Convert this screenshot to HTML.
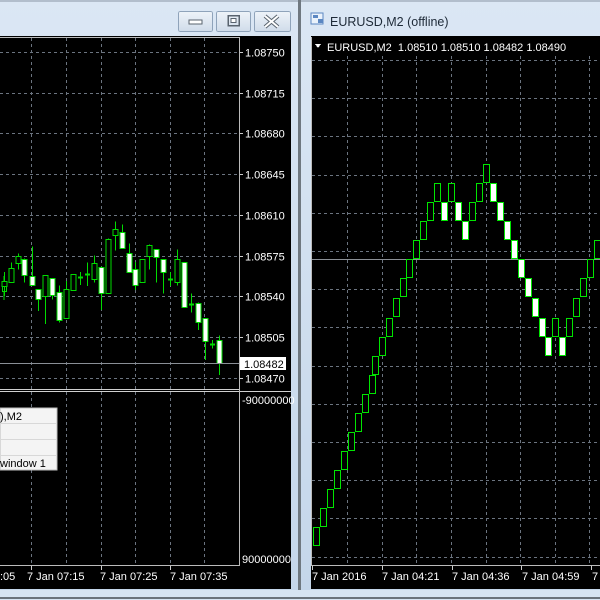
<!DOCTYPE html>
<html><head><meta charset="utf-8"><style>
html,body{margin:0;padding:0;width:600px;height:600px;overflow:hidden;background:#cfdff0;font-family:"Liberation Sans",sans-serif}
svg{position:absolute;left:0;top:0}
</style></head><body>
<svg id="s" width="600" height="600" xmlns="http://www.w3.org/2000/svg" font-family="Liberation Sans, sans-serif" shape-rendering="crispEdges">
<defs><linearGradient id="tb" x1="0" y1="0" x2="0" y2="1"><stop offset="0" stop-color="#dbe7f4"/><stop offset="1" stop-color="#c4d6ea"/></linearGradient>
<linearGradient id="bt" x1="0" y1="0" x2="0" y2="1"><stop offset="0" stop-color="#eef3f9"/><stop offset="1" stop-color="#d0dcea"/></linearGradient></defs>
<rect x="0" y="0" width="600" height="600" fill="url(#tb)"/>
<line x1="0" y1="1" x2="600" y2="1" stroke="#8a96a4"/>
<rect x="298" y="0" width="3" height="600" fill="#6f7880"/>
<rect x="0" y="590" width="600" height="10" fill="#d6e4f2"/>
<line x1="0" y1="598" x2="600" y2="598" stroke="#6a737c" stroke-width="2"/>
<g stroke="#8fa3ba" fill="url(#bt)">
<rect x="178.5" y="11.5" width="34" height="20" rx="2"/>
<rect x="216.5" y="11.5" width="34" height="20" rx="2"/>
<rect x="254.5" y="11.5" width="36" height="20" rx="2"/>
</g>
<rect x="189" y="20" width="13" height="4" fill="#fff" stroke="#59636e"/>
<rect x="228" y="15.5" width="11" height="10" fill="none" stroke="#59636e" stroke-width="1.5"/>
<rect x="231" y="18.5" width="5" height="4" fill="#fff" stroke="#59636e"/>
<g shape-rendering="auto">
<path d="M265 16 L278 27 M278 16 L265 27" stroke="#59636e" stroke-width="4"/>
<path d="M265 16 L278 27 M278 16 L265 27" stroke="#fff" stroke-width="2"/>
</g>
<rect x="311" y="13" width="12" height="11" fill="#eaf2fb" stroke="#5b87c2"/>
<rect x="313" y="15" width="5" height="3" fill="#5b87c2"/>
<rect x="318" y="19" width="5" height="4" fill="#5b87c2"/>
<text x="330" y="26" font-size="12.5" fill="#1e2a38" shape-rendering="auto">EURUSD,M2 (offline)</text>
<rect x="0" y="36" width="291" height="553" fill="#000"/>
<rect x="311" y="36" width="289" height="553" fill="#000"/>
<g id="g"></g>
</svg>
<script>
var s=document.getElementById('g'),h='';
function L(x1,y1,x2,y2,c,d,w){h+='<line x1="'+x1+'" y1="'+y1+'" x2="'+x2+'" y2="'+y2+'" stroke="'+c+'"'+(d?' stroke-dasharray="3,3"':'')+(w?' stroke-width="'+w+'"':'')+'/>';}
function T(x,y,t,c,a){h+='<text x="'+x+'" y="'+y+'" font-size="11" fill="'+(c||'#fff')+'"'+(a?' text-anchor="'+a+'"':'')+'>'+t+'</text>';}
var G='#6b7480';
var vx=[31.5,66.5,101.5,135.5,170.5,204.5];
vx.forEach(function(x){L(x,38,x,389,G,1);L(x,392,x,565,G,1);});
var pr=['1.08750','1.08715','1.08680','1.08645','1.08610','1.08575','1.08540','1.08505','1.08470'];
pr.forEach(function(p,i){var y=Math.round(52+i*40.7)+.5;L(0,y,239,y,G,1);L(239,y,243,y,'#ccc');T(245,y+4,p);});
var C=[[12,213,227,186,258,0],[32,175,217,158,217,0],[53,138,158,130,178,0],[73,146,196,146,218,1],[95,198,224,110,224,1],[115,237,268,237,303,1],[136,196,258,196,342,0],[157,204,256,204,268,1],[178,245,330,226,338,1],[199,237,325,213,325,0],[220,193,240,193,240,0],[240,202,205,186,225,2],[261,192,195,158,228,2],[282,160,206,136,218,0],[303,170,250,170,300,1],[323,86,250,86,250,0],[344,58,76,34,122,0],[365,66,115,44,115,1],[386,128,185,100,185,1],[406,178,224,156,240,1],[427,148,216,148,216,0],[448,104,138,104,178,0],[469,118,142,118,218,1],[490,148,187,148,250,1],[511,206,209,186,228,2],[532,148,216,118,226,0],[552,156,290,156,290,1],[573,282,285,250,308,2],[594,278,336,278,360,1],[615,325,393,325,450,1],[636,401,404,390,415,2],[657,390,460,376,495,1]];
var gc='#00dc00';
L(4,276,4,300,gc);h+='<rect x="2.5" y="283.5" width="4" height="8" fill="#000" stroke="'+gc+'"/>';
C.forEach(function(c){var x=Math.round(c[0]/3)+.5,bt=Math.round(210+c[1]/3)+.5,bb=Math.round(210+c[2]/3)+.5;L(x,210+c[3]/3,x,210+c[4]/3,gc);
if(c[5]==2){L(x-2.5,bt,x+2.5,bt,gc,0,2);}
else h+='<rect x="'+(x-2.5)+'" y="'+bt+'" width="5" height="'+(bb-bt)+'" fill="'+(c[5]?'#fff':'#000')+'" stroke="'+gc+'"/>';});
L(0,363.5,239,363.5,'#8a8f96');
h+='<rect x="240" y="357" width="46" height="13" fill="#fff"/>';T(244,368,'1.08482','#000');
L(0,389.5,239,389.5,'#d0d0d0');L(0,391.5,291,391.5,'#d0d0d0');
L(239.5,37,239.5,566,'#bbb');L(0,37.5,239,37.5,'#bbb');
T(242,404,'-90000000');T(242,563,'90000000');
L(0,565.5,239,565.5,'#bbb');
h+='<rect x="0" y="408" width="57" height="62" fill="#f4f4f4" stroke="#bbb"/>';
[423,439,455].forEach(function(y){L(0,y+.5,57,y+.5,'#d8d8d8');});
T(0,420,'),M2','#000');T(0,467,'window 1','#000');
[31,101,170].forEach(function(x){L(x+.5,566,x+.5,570,'#ccc');});
T(0,580,':05');T(27,580,'7 Jan 07:15');T(100,580,'7 Jan 07:25');T(170,580,'7 Jan 07:35');
[347,382,416,451,486,520,555,589].forEach(function(x){L(x+.5,56,x+.5,565,G,1);});
for(var y=60;y<560;y+=38.2){var yy=Math.round(y)+.5;L(312,yy,600,yy,G,1);}
L(311.5,37,311.5,566,'#bbb');L(311,565.5,600,565.5,'#bbb');
L(312,259.5,600,259.5,'#8a8f96');
var B=[];for(var i=0;i<9;i++)B.push([313+i*7,527-i*19,0]);
var Z=[[195,617,0],[215,560,0],[236,503,0],[257,443,0],[278,385,0],[298,328,0],[319,271,0],[340,214,0],[361,157,0],[382,100,0],[403,157,1],[424,100,0],[445,157,1],[466,214,1],[487,157,0],[507,100,0],[528,43,0],[548,100,1],[569,157,1],[590,214,1],[611,271,1],[632,328,1],[653,385,1],[674,443,1],[695,503,1],[715,560,1],[736,503,0],[757,560,1],[778,503,0],[799,443,0],[820,385,0],[840,328,0],[861,271,0]];
Z.forEach(function(z){B.push([310+z[0]/3-3,150+z[1]/3,z[2]]);});
B.forEach(function(b){h+='<rect x="'+(Math.round(b[0])+.5)+'" y="'+(Math.round(b[1])+.5)+'" width="6" height="18" fill="'+(b[2]?'#fff':'#000')+'" stroke="#00e600"/>';});
h+='<rect x="312" y="38" width="288" height="17" fill="#000"/>';
h+='<path d="M315 44 L321 44 L318 48 Z" fill="#fff"/>';
T(327,51,'EURUSD,M2&#160;&#160;1.08510 1.08510 1.08482 1.08490');
[382,452,521,591].forEach(function(x){L(x+.5,566,x+.5,570,'#ccc');});
L(312.5,566,312.5,570,'#ccc');
T(312,580,'7 Jan 2016');T(382,580,'7 Jan 04:21');T(452,580,'7 Jan 04:36');T(522,580,'7 Jan 04:59');T(592,580,'7 J');
s.innerHTML=h;
</script>
</body></html>
